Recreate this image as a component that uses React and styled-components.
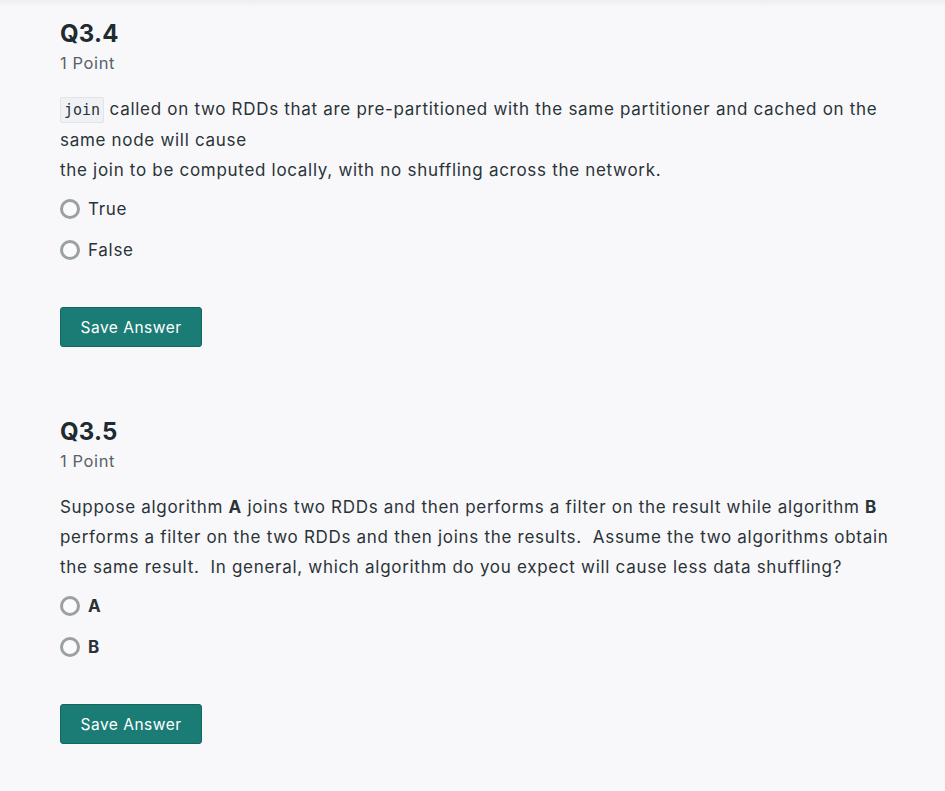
import React from 'react';
import styled, { createGlobalStyle } from 'styled-components';

const GlobalStyle = createGlobalStyle`
  html, body {
    margin: 0;
    padding: 0;
    background: #f8f8fa;
  }
  body {
    font-family: Inter, "Open Sans", sans-serif;
    color: #2a3338;
  }
`;

const Page = styled.div`
  min-height: 791px;
  background: linear-gradient(#eeeff2 0px, #f8f8fa 8px);
  padding: 18px 0 30px 60px;
  box-sizing: border-box;
`;

const Question = styled.section`
  display: flex;
  flex-direction: column;
  margin-bottom: 69px;

  &:last-child {
    margin-bottom: 0;
  }
`;

const Title = styled.h2`
  margin: 0;
  font-size: 24px;
  line-height: 32px;
  font-weight: 700;
  letter-spacing: 0.2px;
  color: #1e2b30;
`;

const Points = styled.div`
  font-size: 16.5px;
  line-height: 24px;
  letter-spacing: 0.6px;
  color: #5b6266;
  margin-top: 1px;
`;

const Prompt = styled.p`
  margin: 19px 0 0;
  font-size: 17px;
  line-height: 30px;
  letter-spacing: 0.7px;
  white-space: nowrap;
`;

const Code = styled.code`
  font-family: "DejaVu Sans Mono", monospace;
  font-size: 15px;
  letter-spacing: 0;
  background: #f0f1f4;
  border: 1px solid #e1e3e7;
  border-radius: 2px;
  padding: 3px 3px;
`;

const Options = styled.div`
  display: flex;
  flex-direction: column;
  gap: 17px;
  margin-top: 12px;
`;

const Option = styled.label`
  display: flex;
  align-items: center;
  gap: 8px;
  font-size: 17px;
  line-height: 24px;
  letter-spacing: 0.7px;
  font-weight: ${p => (p.$bold ? 700 : 400)};
`;

const Radio = styled.span`
  width: 14px;
  height: 14px;
  border-radius: 50%;
  border: 3px solid #9aa0a4;
  background: #fbfbfc;
  flex: none;
`;

const SaveButton = styled.button`
  align-self: flex-start;
  margin-top: 45px;
  width: 142px;
  height: 40px;
  background: #1b7c75;
  border: 1px solid #146660;
  border-radius: 3px;
  color: #ffffff;
  font-family: Inter, "Open Sans", sans-serif;
  font-size: 15.5px;
  letter-spacing: 0.5px;
  cursor: pointer;
`;

export default function App() {
  return (
    <>
      <GlobalStyle />
      <Page>
        <Question>
          <Title>Q3.4</Title>
          <Points>1 Point</Points>
          <Prompt>
            <Code>join</Code> called on two RDDs that are pre-partitioned with the same partitioner and cached on the
            <br />
            same node will cause
            <br />
            the join to be computed locally, with no shuffling across the network.
          </Prompt>
          <Options>
            <Option><Radio />True</Option>
            <Option><Radio />False</Option>
          </Options>
          <SaveButton>Save Answer</SaveButton>
        </Question>
        <Question>
          <Title>Q3.5</Title>
          <Points>1 Point</Points>
          <Prompt>
            Suppose algorithm <b>A</b> joins two RDDs and then performs a filter on the result while algorithm <b>B</b>
            <br />
            performs a filter on the two RDDs and then joins the results.&nbsp; Assume the two algorithms obtain
            <br />
            the same result.&nbsp; In general, which algorithm do you expect will cause less data shuffling?
          </Prompt>
          <Options>
            <Option $bold><Radio />A</Option>
            <Option $bold><Radio />B</Option>
          </Options>
          <SaveButton>Save Answer</SaveButton>
        </Question>
      </Page>
    </>
  );
}
